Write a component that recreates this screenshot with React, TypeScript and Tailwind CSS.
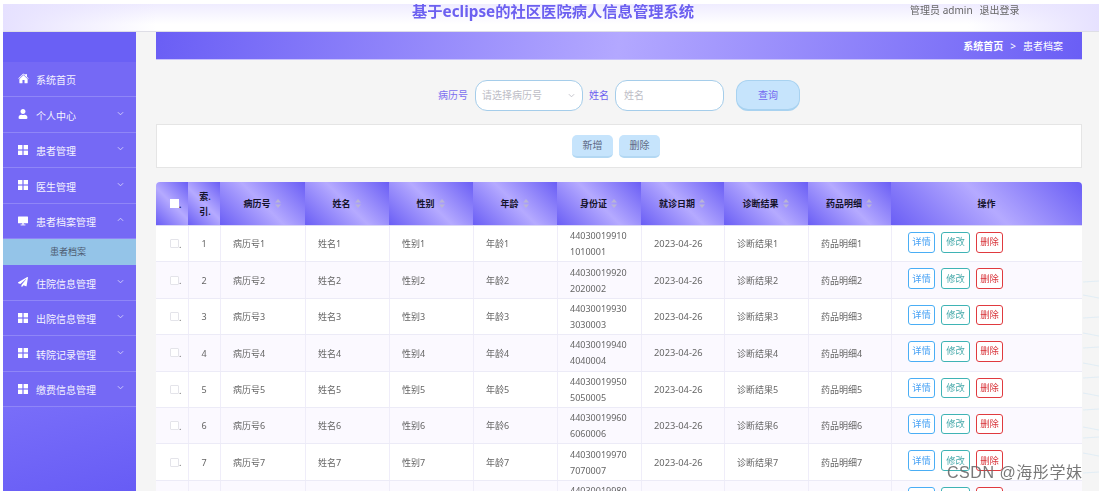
import { FaUser, FaPaperPlane } from "react-icons/fa";
import { IoHome } from "react-icons/io5";
import type { ReactNode } from "react";

const cols = "grid grid-cols-[32px_32px_85px_84px_84px_84px_84px_83px_84px_83px_191px]";
const rowCols = "grid grid-cols-[32.5px_32px_85px_84px_84px_84px_84px_83px_84px_83px_190.5px]";

function Grid4() {
  return (
    <svg viewBox="0 0 10 10" className="h-[10px] w-[10px]" fill="currentColor">
      <rect x="0" y="0" width="4.4" height="4.4" />
      <rect x="5.6" y="0" width="4.4" height="4.4" />
      <rect x="0" y="5.6" width="4.4" height="4.4" />
      <rect x="5.6" y="5.6" width="4.4" height="4.4" />
    </svg>
  );
}

function Monitor() {
  return (
    <svg viewBox="0 0 10 10" className="h-[10px] w-[10px]" fill="currentColor">
      <rect x="0" y="0.5" width="10" height="6.8" rx="0.4" />
      <rect x="4" y="7.3" width="2" height="1.2" />
      <rect x="2.6" y="8.5" width="4.8" height="0.9" />
    </svg>
  );
}

function Chevron({ up = false }: { up?: boolean }) {
  return (
    <svg viewBox="0 0 8 5" className="ml-auto mr-[12px] mt-[-2px] h-[5px] w-[7px]" fill="none" stroke="#d8d4fb" strokeWidth="1">
      <polyline points={up ? "1,4 4,1 7,4" : "1,1 4,4 7,1"} />
    </svg>
  );
}

function MenuItem({ icon, label, arrow = "down" }: { icon: ReactNode; label: string; arrow?: "down" | "up" | "none" }) {
  return (
    <div className="flex h-[35.5px] items-center border-b border-b-[#8f86f7] bg-[#7569f5] pl-[15px] text-[10px] text-[#f4f3ff]">
      <span className="flex w-[18px] shrink-0 text-white">{icon}</span>
      <span className="mt-[4px]">{label}</span>
      {arrow !== "none" && <Chevron up={arrow === "up"} />}
    </div>
  );
}

function Sidebar() {
  return (
    <aside className="w-[133px] shrink-0 self-stretch bg-[linear-gradient(165deg,#7d72fa,#7d72fa_70%,#675cf5)]">
      <div className="h-[29.5px] bg-[#6a60f5]" />
      <MenuItem icon={<IoHome className="h-[11px] w-[11px]" />} label="系统首页" arrow="none" />
      <MenuItem icon={<FaUser className="h-[10px] w-[10px]" />} label="个人中心" />
      <MenuItem icon={<Grid4 />} label="患者管理" />
      <MenuItem icon={<Grid4 />} label="医生管理" />
      <MenuItem icon={<Monitor />} label="患者档案管理" arrow="up" />
      <div className="flex h-[26px] items-center justify-center bg-[#94c4e8] pr-[3px] text-[9px] text-[#4d5a70]">患者档案</div>
      <MenuItem icon={<FaPaperPlane className="h-[10px] w-[10px]" />} label="住院信息管理" />
      <MenuItem icon={<Grid4 />} label="出院信息管理" />
      <MenuItem icon={<Grid4 />} label="转院记录管理" />
      <MenuItem icon={<Grid4 />} label="缴费信息管理" />
    </aside>
  );
}

function Sort() {
  return (
    <svg viewBox="0 0 6 9" className="ml-[4px] h-[9px] w-[6px] shrink-0" fill="#b9b4d8">
      <polygon points="3,0 6,3.6 0,3.6" />
      <polygon points="3,9 6,5.4 0,5.4" />
    </svg>
  );
}

const headBg = "bg-[linear-gradient(45deg,#6a5ef5,#b5aaff_50%,#6a5ef5)]";

function Head() {
  const labels = ["病历号", "姓名", "性别", "年龄", "身份证", "就诊日期", "诊断结果", "药品明细"];
  return (
    <div className={`${cols} h-[44px] overflow-hidden rounded-t-[4px] border-b-[1.5px] border-b-[#dcd8f7] text-[9px] font-semibold text-[#15132b]`}>
      <div className={`${headBg} flex items-center pl-[14px]`}>
        <span className="h-[9px] w-[9px] bg-white" />
        <span className="mt-[3px]">.</span>
      </div>
      <div className={`${headBg} flex flex-col items-center justify-center pl-[2px] leading-[15px]`}>
        <span>索.</span>
        <span>引.</span>
      </div>
      {labels.map((l) => (
        <div key={l} className={`${headBg} flex items-center justify-center pr-[1px]`}>
          <span>{l}</span>
          <Sort />
        </div>
      ))}
      <div className={`${headBg} flex items-center justify-center`}>操作</div>
    </div>
  );
}

function ActionBtn({ label, cls }: { label: string; cls: string }) {
  return (
    <span className={`flex h-[20.5px] items-center justify-center rounded-[3px] border bg-white text-[9.3px] ${cls}`}>{label}</span>
  );
}

function Row({ n }: { n: number }) {
  const cell = "flex items-center border-r-[1.5px] border-r-[#efedf9] pl-[12.5px] pt-[1px]";
  const simple = ["病历号", "姓名", "性别", "年龄"];
  return (
    <div className={`${rowCols} h-[36.4px] border-b-[1.5px] border-b-[#ecebf7] text-[9px] text-[#666] ${n % 2 === 0 ? "bg-[#fbf9ff]" : "bg-white"}`}>
      <div className="flex items-center border-r-[1.5px] border-r-[#efedf9] pl-[14px]">
        <span className="h-[9px] w-[9px] rounded-[1px] border border-[#e4e4ea] bg-white" />
        <span className="mt-[2px]">.</span>
      </div>
      <div className="flex items-center justify-center border-r-[1.5px] border-r-[#efedf9] pt-[1px]">{n}</div>
      {simple.map((s) => (
        <div key={s} className={cell}>{s}{n}</div>
      ))}
      <div className={`${cell} leading-[16px]`}>
        <span className="w-[62px] break-all">{`440300199${n}0`}<br />{`${n}0${n}000${n}`}</span>
      </div>
      <div className={`${cell} text-[9.3px]`}>2023-04-26</div>
      <div className={cell}>诊断结果{n}</div>
      <div className={cell}>药品明细{n}</div>
      <div className="flex items-start gap-[6px] pl-[16.5px] pt-[6px]">
        <span className="w-[27px]"><ActionBtn label="详情" cls="border-[#4aaef5] text-[#4aa3f5]" /></span>
        <span className="w-[29px]"><ActionBtn label="修改" cls="border-[#3fb3b5] text-[#45a9aa]" /></span>
        <span className="w-[27px]"><ActionBtn label="删除" cls="border-[#e03a3f] text-[#d8343a]" /></span>
      </div>
    </div>
  );
}

function FaintLines() {
  const ys = [282, 295, 318, 333, 348, 363, 378, 393, 410, 427, 438, 453, 473];
  return (
    <svg viewBox="0 0 16 250" className="absolute left-[1083px] top-[241px] h-[250px] w-[16px]" fill="none" stroke="#dcebf5" strokeWidth="0.8">
      {ys.map((y, i) => (
        <line key={y} x1="0" y1={y - 241} x2="16" y2={y - 241 + (i % 2 === 0 ? -1 : 3)} />
      ))}
    </svg>
  );
}

export default function App() {
  return (
    <div className="relative h-[491px] w-[1099px] overflow-hidden bg-white font-['Noto_Sans','Noto_Sans_CJK_SC',sans-serif]">
      <div className="h-full w-full pl-[3px] pt-[4px] blur-[0.35px]">
        <header className="relative flex h-[28px] items-start overflow-hidden border-b border-b-[#dedee6] bg-[linear-gradient(90deg,#e6e1ff,#e6e1ff00_14%,#e6e1ff00_88%,#e6e1ff),linear-gradient(180deg,#efecff,#ffffff_75%)]">
          <h1 className="ml-[409px] mt-[-5px] text-[15.3px] font-bold leading-[24px] text-[#6c60f0]">基于eclipse的社区医院病人信息管理系统</h1>
          <div className="ml-[216px] mt-[-1px] flex gap-[7px] text-[10px] leading-[14px] text-[#666]">
            <span>管理员 admin</span>
            <span>退出登录</span>
          </div>
        </header>
        <div className="flex h-[459px]">
          <Sidebar />
          <main className="relative flex-1 bg-[#f5f5f5] pl-[20px] pr-[17px]">
            <div className="flex h-[28px] items-center justify-end border-b border-b-[#c9c2fb] bg-[linear-gradient(100deg,#6a5ef5,#b3a8ff_50%,#6a5ef5)] pr-[19px] pt-[2px] text-[10px] text-white">
              <span className="font-bold">系统首页</span>
              <span className="mx-[7px]">&gt;</span>
              <span>患者档案</span>
            </div>
            <div className="ml-[282px] mt-[20px] flex h-[31px] items-center text-[10px]">
              <span className="w-[31px] text-[#7b6ff0]">病历号</span>
              <div className="ml-[6px] flex h-full w-[108px] items-center justify-between rounded-[12px] border border-[#a5cdea] bg-white pl-[6px] pr-[7px] text-[#bdbdc6]">
                <span>请选择病历号</span>
                <svg viewBox="0 0 8 5" className="h-[5px] w-[7px]" fill="none" stroke="#bdbdc6" strokeWidth="1"><polyline points="1,1 4,4 7,1" /></svg>
              </div>
              <span className="ml-[6px] w-[20px] text-[#6c60f0]">姓名</span>
              <div className="ml-[6px] flex h-full w-[109px] items-center rounded-[12px] border border-[#a5cdea] bg-white pl-[8px] text-[#bdbdc6]">姓名</div>
              <div className="ml-[12px] flex h-full w-[64px] items-center justify-center rounded-[12px] border border-b-2 border-[#a8d2f0] bg-[#c6e4fc] text-[#7468f0]">查询</div>
            </div>
            <div className="mt-[13px] flex h-[44px] items-center justify-center gap-[6px] border border-[#e5e5e5] bg-white pr-[6px] text-[10px] text-[#5f6b85]">
              <span className="flex h-[23px] w-[41px] items-center justify-center rounded-[5px] border-b-2 border-b-[#b3d8f3] bg-[#c6e4fc]">新增</span>
              <span className="flex h-[23px] w-[41px] items-center justify-center rounded-[5px] border-b-2 border-b-[#b3d8f3] bg-[#c6e4fc]">删除</span>
            </div>
            <div className="mt-[14px] rounded-t-[4px] bg-white">
              <Head />
              {[1, 2, 3, 4, 5, 6, 7, 8].map((n) => (
                <Row key={n} n={n} />
              ))}
            </div>
          </main>
        </div>
      </div>
      <FaintLines />
      <div className="absolute left-[947px] top-[462px] text-[16px] leading-[22px] tracking-[0.55px] text-[#6a6a6a] opacity-90 font-['Liberation_Sans','Noto_Sans_CJK_SC',sans-serif]">CSDN @海彤学妹</div>
    </div>
  );
}
